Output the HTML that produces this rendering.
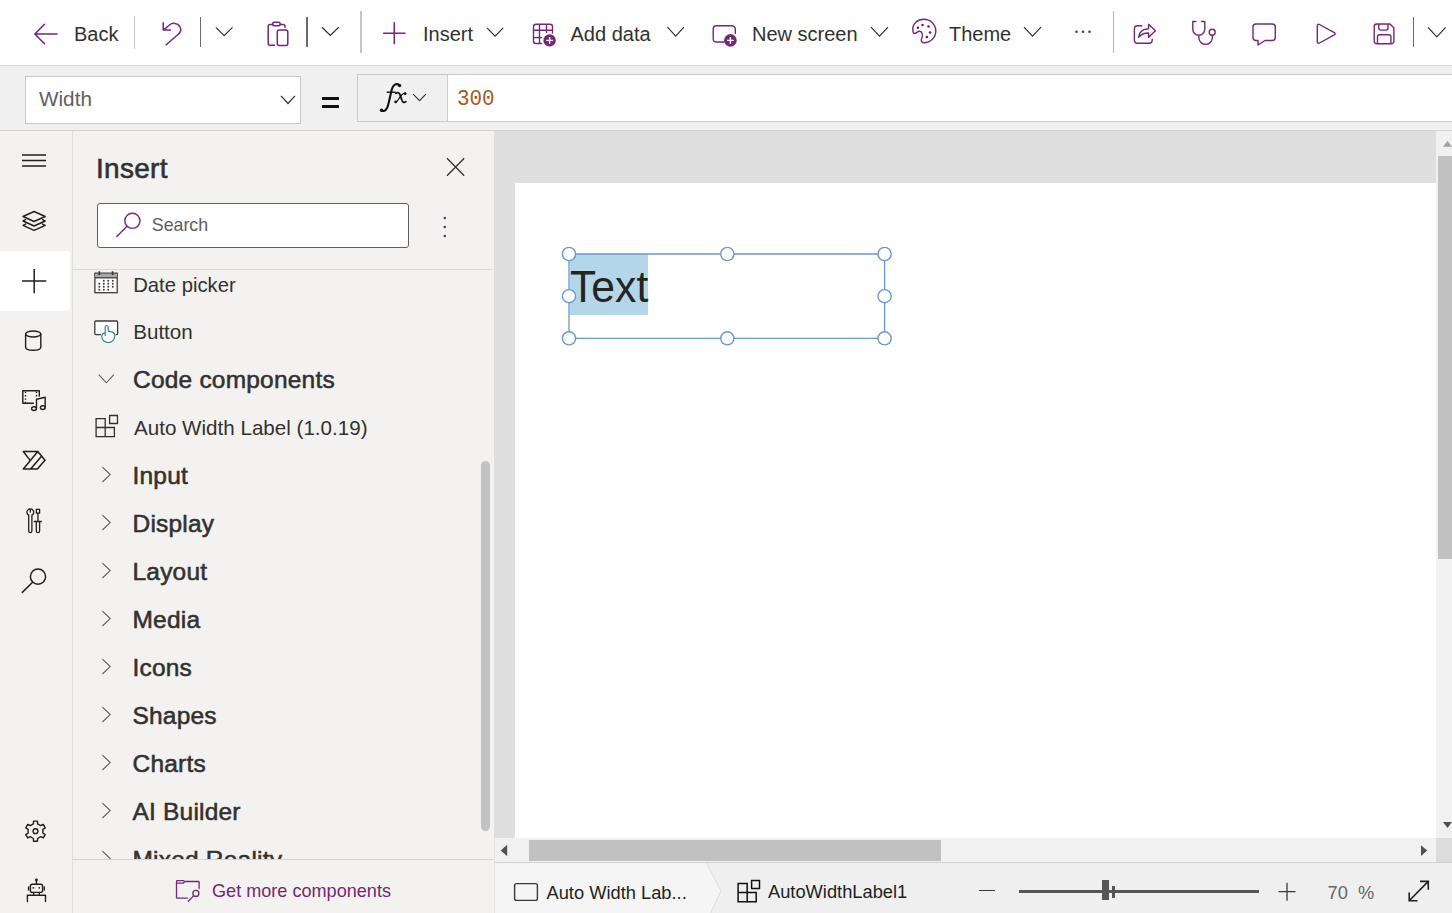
<!DOCTYPE html>
<html><head><meta charset="utf-8">
<style>
*{box-sizing:border-box;margin:0;padding:0}
html,body{width:1452px;height:913px;overflow:hidden;background:#fff;font-family:"Liberation Sans",sans-serif;color:#323130}
.a{position:absolute}
svg{position:absolute;overflow:visible}
.t{position:absolute;white-space:nowrap;line-height:1}
</style></head><body>

<div class="a" style="left:0px;top:0px;width:1452px;height:65px;background:#fff;"></div>
<div class="a" style="left:0px;top:65px;width:1452px;height:1px;background:#d6d6d6;"></div>
<div class="a" style="left:0px;top:66px;width:1452px;height:64px;background:#f0f0f0;"></div>
<div class="a" style="left:0px;top:130px;width:1452px;height:1px;background:#d2d2d2;"></div>
<div class="a" style="left:0px;top:131px;width:72px;height:782px;background:#f3f2f1;"></div>
<div class="a" style="left:72px;top:131px;width:1px;height:782px;background:#e1dfdd;"></div>
<div class="a" style="left:73px;top:131px;width:421px;height:782px;background:#f3f2f1;"></div>
<div class="a" style="left:494px;top:131px;width:942px;height:707px;background:#dfdfdf;"></div>
<div class="a" style="left:515px;top:183px;width:921px;height:655px;background:#fff;"></div>
<div class="a" style="left:1436px;top:131px;width:16px;height:707px;background:#f1f1f1;"></div>
<div class="a" style="left:494px;top:838px;width:942px;height:24px;background:#f1f1f1;"></div>
<div class="a" style="left:1436px;top:838px;width:16px;height:24px;background:#dcdcdc;"></div>
<div class="a" style="left:494px;top:862px;width:958px;height:1px;background:#d0d0d0;"></div>
<div class="a" style="left:494px;top:863px;width:958px;height:50px;background:#efefef;"></div>
<svg width="1452" height="913" style="left:0;top:0" fill="none" stroke="#742774" stroke-width="1.6" stroke-linecap="round" stroke-linejoin="round"><path d="M34.8 34 H57 M44.5 24.3 L34.8 34 L44.5 43.7"/></svg>
<div class="t" style="left:74px;top:24.07px;font-size:20px;color:#323130;font-weight:400;font-family:'Liberation Sans',sans-serif;">Back</div>
<div class="a" style="left:134px;top:16px;width:1px;height:33px;background:#c8c8c8;"></div>
<svg width="1452" height="913" style="left:0;top:0" fill="none" stroke="#742774" stroke-width="1.5" stroke-linecap="round" stroke-linejoin="round"><path d="M163.2 22.8 V30 H170.5 M163.5 29.8 L169.5 25 C172.5 22.5 177.5 22.8 179.8 26.5 C181.5 29.5 180.5 32.5 178.3 34.3 L166.2 44.8"/></svg>
<div class="a" style="left:200px;top:17px;width:1px;height:30px;background:#6b6b6b;"></div>
<svg width="1452" height="913" style="left:0;top:0" fill="none" stroke="#323130" stroke-width="1.2" stroke-linecap="round" stroke-linejoin="round"><path d="M215.8 27.4 L224.15 35.7 L232.5 27.4" stroke-linecap="butt" stroke-linejoin="miter"/></svg>
<svg width="1452" height="913" style="left:0;top:0" fill="none" stroke="#742774" stroke-width="1.5" stroke-linecap="round" stroke-linejoin="round"><path d="M274.6 45.2 H270.2 A2 2 0 0 1 268.2 43.2 V26.4 A2 2 0 0 1 270.2 24.4 H272.6 M280.2 24.4 H283 A2 2 0 0 1 285 26.4 V27.3"/><rect x="272.6" y="22.3" width="7.6" height="3.5" rx="1.75"/><rect x="277.3" y="29.9" width="10.5" height="15.5" rx="2"/></svg>
<div class="a" style="left:306px;top:17px;width:2px;height:30px;background:#6b6b6b;"></div>
<svg width="1452" height="913" style="left:0;top:0" fill="none" stroke="#323130" stroke-width="1.2" stroke-linecap="round" stroke-linejoin="round"><path d="M322 27.3 L330.35 35.5 L338.7 27.3" stroke-linecap="butt" stroke-linejoin="miter"/></svg>
<div class="a" style="left:360px;top:11px;width:2px;height:42px;background:#c8c8c8;"></div>
<svg width="1452" height="913" style="left:0;top:0" fill="none" stroke="#742774" stroke-width="1.6" stroke-linecap="round" stroke-linejoin="round"><path d="M394.3 22.7 V43.6 M383.7 33.2 H404.9"/></svg>
<div class="t" style="left:423px;top:23.77px;font-size:20px;color:#323130;font-weight:400;font-family:'Liberation Sans',sans-serif;">Insert</div>
<svg width="1452" height="913" style="left:0;top:0" fill="none" stroke="#323130" stroke-width="1.2" stroke-linecap="round" stroke-linejoin="round"><path d="M487 27.8 L495.1 36.2 L503.2 27.8" stroke-linecap="butt" stroke-linejoin="miter"/></svg>
<svg width="1452" height="913" style="left:0;top:0" fill="none" stroke="#742774" stroke-width="1.4" stroke-linecap="round" stroke-linejoin="round"><path d="M541.5 43.5 H536 A2.5 2.5 0 0 1 533.5 41 V26.7 A2.5 2.5 0 0 1 536 24.2 H550 A2.5 2.5 0 0 1 552.5 26.7 V33 M533.5 30.3 H552.5 M533.5 37.6 H541.7 M539.5 24.2 V43.5 M546.5 24.2 V32.5"/></svg>
<svg width="1452" height="913" style="left:0;top:0"><circle cx="549.6" cy="40.4" r="6.2" fill="#742774"/><path d="M549.6 37 V43.8 M546.2 40.4 H553" stroke="#fff" stroke-width="1.4"/></svg>
<div class="t" style="left:570.5px;top:23.77px;font-size:20px;color:#323130;font-weight:400;font-family:'Liberation Sans',sans-serif;">Add data</div>
<svg width="1452" height="913" style="left:0;top:0" fill="none" stroke="#323130" stroke-width="1.2" stroke-linecap="round" stroke-linejoin="round"><path d="M667.5 27.2 L675.7 36.2 L683.9 27.2" stroke-linecap="butt" stroke-linejoin="miter"/></svg>
<svg width="1452" height="913" style="left:0;top:0" fill="none" stroke="#742774" stroke-width="1.4" stroke-linecap="round" stroke-linejoin="round"><path d="M724 42 H716.5 A3.3 3.3 0 0 1 713.2 38.7 V29 A3.3 3.3 0 0 1 716.5 25.7 H732 A3.3 3.3 0 0 1 735.3 29 V33.5"/></svg>
<svg width="1452" height="913" style="left:0;top:0"><circle cx="730.4" cy="40.4" r="6.3" fill="#742774"/><path d="M730.4 37 V43.8 M727 40.4 H733.8" stroke="#fff" stroke-width="1.4"/></svg>
<div class="t" style="left:752px;top:23.77px;font-size:20px;color:#323130;font-weight:400;font-family:'Liberation Sans',sans-serif;">New screen</div>
<svg width="1452" height="913" style="left:0;top:0" fill="none" stroke="#323130" stroke-width="1.2" stroke-linecap="round" stroke-linejoin="round"><path d="M871 27.2 L879.5 36.2 L888 27.2" stroke-linecap="butt" stroke-linejoin="miter"/></svg>
<svg width="1452" height="913" style="left:0;top:0" fill="none" stroke="#742774" stroke-width="1.4" stroke-linecap="round" stroke-linejoin="round"><path d="M912.8 30 C912.3 23.5 917.8 19.2 924 19.2 C930.5 19.2 935.8 24.5 935.8 31 C935.8 37.5 930.5 42.7 924 42.7 C921.5 42.7 920.7 40.5 921.7 38.5 C923.3 35.5 922.5 31.5 919.5 31.3 C917.5 31.2 916.5 33.5 914.6 33.5 C913.4 33.5 912.9 32 912.8 30 Z"/></svg>
<svg width="1452" height="913" style="left:0;top:0" fill="#5a1f5a"><circle cx="917.9" cy="27.8" r="1.25"/><circle cx="922.5" cy="25" r="1.25"/><circle cx="928.5" cy="26.4" r="1.25"/><circle cx="930" cy="32.5" r="1.25"/><circle cx="926.9" cy="37" r="1.25"/></svg>
<div class="t" style="left:949px;top:23.77px;font-size:20px;color:#323130;font-weight:400;font-family:'Liberation Sans',sans-serif;">Theme</div>
<svg width="1452" height="913" style="left:0;top:0" fill="none" stroke="#323130" stroke-width="1.2" stroke-linecap="round" stroke-linejoin="round"><path d="M1024 27.2 L1032.5 36.2 L1041 27.2" stroke-linecap="butt" stroke-linejoin="miter"/></svg>
<svg width="1452" height="913" style="left:0;top:0" fill="#742774"><circle cx="1076.5" cy="31.7" r="1.3"/><circle cx="1083" cy="31.7" r="1.3"/><circle cx="1089.5" cy="31.7" r="1.3"/></svg>
<div class="a" style="left:1113px;top:11px;width:1px;height:42px;background:#b4b4b4;"></div>
<svg width="1452" height="913" style="left:0;top:0" fill="none" stroke="#742774" stroke-width="1.4" stroke-linecap="round" stroke-linejoin="round"><path d="M1141.9 25.7 H1137.4 A3 3 0 0 0 1134.4 28.7 V40.2 A3 3 0 0 0 1137.4 43.2 H1149.2 A3 3 0 0 0 1152.2 40.2 V39.1"/><path d="M1138.6 37.2 C1139.2 32.2 1143 29 1148.6 28.8 V24.3 L1155.5 30.8 L1148.6 37.3 V33 C1144.2 33 1141 34.5 1138.6 37.2 Z"/></svg>
<svg width="1452" height="913" style="left:0;top:0" fill="none" stroke="#742774" stroke-width="1.4" stroke-linecap="round" stroke-linejoin="round"><path d="M1196 21.5 H1192.8 V29.3 A6 6 0 0 0 1204.8 29.3 V21.5 H1201.5 M1198.8 35.2 V37.6 A6.8 6.8 0 0 0 1212.4 37.6 V35.4"/><circle cx="1212.2" cy="32.2" r="3"/></svg>
<svg width="1452" height="913" style="left:0;top:0" fill="none" stroke="#742774" stroke-width="1.4" stroke-linecap="round" stroke-linejoin="round"><path d="M1256 24 H1272.3 A3 3 0 0 1 1275.3 27 V37.5 A3 3 0 0 1 1272.3 40.5 H1265 L1258 45 V40.5 H1256 A3 3 0 0 1 1253 37.5 V27 A3 3 0 0 1 1256 24 Z"/></svg>
<svg width="1452" height="913" style="left:0;top:0" fill="none" stroke="#742774" stroke-width="1.4" stroke-linecap="round" stroke-linejoin="round"><path d="M1317.3 25.8 C1317.3 24.5 1318.4 23.9 1319.5 24.5 L1334.3 32.6 C1335.4 33.2 1335.4 34.3 1334.3 34.9 L1319.5 43 C1318.4 43.6 1317.3 43 1317.3 41.8 Z"/></svg>
<svg width="1452" height="913" style="left:0;top:0" fill="none" stroke="#742774" stroke-width="1.4" stroke-linecap="round" stroke-linejoin="round"><path d="M1376.7 24 H1390 L1393.9 27.9 V41.2 A2.5 2.5 0 0 1 1391.4 43.7 H1376.7 A2.5 2.5 0 0 1 1374.2 41.2 V26.5 A2.5 2.5 0 0 1 1376.7 24 Z M1378.8 24 V28.1 A2 2 0 0 0 1380.8 30.1 H1386 A2 2 0 0 0 1388 28.1 V24 M1377.5 43.7 V36.7 A2 2 0 0 1 1379.5 34.7 H1388.9 A2 2 0 0 1 1390.9 36.7 V43.7"/></svg>
<div class="a" style="left:1413px;top:17px;width:1px;height:30px;background:#6b6b6b;"></div>
<svg width="1452" height="913" style="left:0;top:0" fill="none" stroke="#323130" stroke-width="1.2" stroke-linecap="round" stroke-linejoin="round"><path d="M1428 27.4 L1436.8 36.8 L1445.6 27.4" stroke-linecap="butt" stroke-linejoin="miter"/></svg>
<div class="a" style="left:25px;top:76px;width:276px;height:48px;background:#fff;border:1px solid #c8c8c8"></div>
<div class="t" style="left:39px;top:89.48px;font-size:20.7px;color:#605e5c;font-weight:400;font-family:'Liberation Sans',sans-serif;">Width</div>
<svg width="1452" height="913" style="left:0;top:0" fill="none" stroke="#323130" stroke-width="1.2" stroke-linecap="round" stroke-linejoin="round"><path d="M281 95.8 L288.0 103.5 L295 95.8" stroke-linecap="butt" stroke-linejoin="miter"/></svg>
<div class="a" style="left:322px;top:97px;width:17px;height:3px;background:#111;"></div>
<div class="a" style="left:322px;top:105px;width:17px;height:3px;background:#111;"></div>
<div class="a" style="left:357px;top:74px;width:91px;height:48px;background:#f0f0f0;border:1px solid #c8c8c8;border-right:1px solid #cfcfcf"></div>
<svg width="1452" height="913" style="left:0;top:0" fill="none" stroke="#111" stroke-width="1.5" stroke-linecap="round" stroke-linejoin="round"><path d="M399.6 85.2 C396.5 82.6 392.8 84.8 391.6 90 L388.3 104.5 C387.2 109.3 384.8 112.2 381.4 110.6" stroke-width="2.1"/><path d="M386.6 92.2 H395.6" stroke-width="1.4" stroke-linecap="butt"/><path d="M395.8 93.2 C398.3 91.9 399.6 93 400.6 96.2 L401.9 100.2 C402.8 102.6 404 103 405.8 101.8" stroke-width="1.8"/><path d="M405.4 93.6 C403.4 92.6 401.8 94.2 399.2 98.2 C397.8 100.6 396.8 102.6 395.4 102" stroke-width="1.2"/></svg>
<svg width="1452" height="913" style="left:0;top:0" fill="#111"><circle cx="399.6" cy="85.6" r="1.7"/><circle cx="381.6" cy="110.2" r="1.7"/><circle cx="405.2" cy="93.7" r="1.4"/><circle cx="395.7" cy="101.9" r="1.4"/></svg>
<svg width="1452" height="913" style="left:0;top:0" fill="none" stroke="#323130" stroke-width="1.1" stroke-linecap="round" stroke-linejoin="round"><path d="M413.1 94.2 L419.5 100.60000000000001 L425.90000000000003 94.2" stroke-linecap="butt" stroke-linejoin="miter"/></svg>
<div class="a" style="left:448px;top:74px;width:1010px;height:48px;background:#fff;border-top:1px solid #c8c8c8;border-bottom:1px solid #c8c8c8"></div>
<div class="t" style="left:457px;top:87.75px;font-size:22.5px;color:#a5591a;font-weight:400;font-family:'Liberation Mono',monospace;transform:scaleX(0.93);transform-origin:0 0;">300</div>
<svg width="1452" height="913" style="left:0;top:0" fill="none" stroke="#201f1e" stroke-width="1.3" stroke-linecap="round" stroke-linejoin="round"><path d="M22 155 H46 M22 160.5 H46 M22 166 H46" stroke-linecap="butt"/></svg>
<svg width="1452" height="913" style="left:0;top:0" fill="none" stroke="#201f1e" stroke-width="1.4" stroke-linecap="round" stroke-linejoin="round"><path d="M34.1 211.5 L45.2 216.5 L34.1 221.5 L23 216.5 Z M25.6 219.7 L23 221 L34.1 226 L45.2 221 L42.6 219.7 M25.6 224.1 L23 225.4 L34.1 230.4 L45.2 225.4 L42.6 224.1"/></svg>
<div class="a" style="left:0;top:251px;width:70px;height:60px;background:#fff;border-radius:0 3px 3px 0"></div>
<svg width="1452" height="913" style="left:0;top:0" fill="none" stroke="#201f1e" stroke-width="1.5" stroke-linecap="round" stroke-linejoin="round"><path d="M34.2 269 V293.2 M22 281.1 H46.3" stroke-linecap="butt"/></svg>
<svg width="1452" height="913" style="left:0;top:0" fill="none" stroke="#201f1e" stroke-width="1.4" stroke-linecap="round" stroke-linejoin="round"><ellipse cx="33.2" cy="334" rx="7.6" ry="3"/><path d="M25.6 334 V347.3 C25.6 349 29 350.3 33.2 350.3 C37.4 350.3 40.8 349 40.8 347.3 V334"/></svg>
<svg width="1452" height="913" style="left:0;top:0" fill="none" stroke="#201f1e" stroke-width="1.4" stroke-linecap="round" stroke-linejoin="round"><path d="M33.4 403.2 H22.8 V390.8 H39.3 V396 "/><path d="M25.5 391.8 V403 M36.5 391.8 V396.5" stroke-dasharray="1.3 2" stroke-linecap="butt"/><path d="M36.5 408.5 V399.3 L45.2 397.3 V407.6"/><ellipse cx="34" cy="408.6" rx="2.4" ry="1.9"/><ellipse cx="42.8" cy="407.6" rx="2.4" ry="1.9"/></svg>
<svg width="1452" height="913" style="left:0;top:0" fill="none" stroke="#201f1e" stroke-width="1.5" stroke-linecap="round" stroke-linejoin="round"><path d="M23.3 451.5 H37.8 L45 460.2 L37.4 469 H23.3 L37.8 451.5 M23.3 451.5 L29.4 459.4 M41.3 456.4 L30.6 469"/></svg>
<svg width="1452" height="913" style="left:0;top:0" fill="none" stroke="#201f1e" stroke-width="1.3" stroke-linecap="round" stroke-linejoin="round"><path d="M28.7 515 V531 A1.6 1.6 0 0 0 31.9 531 V515 M28.7 515.2 A3.4 3.4 0 1 1 31.9 515.2 M30.3 509 V512"/><path d="M36.3 509.3 H39.6 V513.2 H36.3 Z M37.95 513.2 V521.5 M34.3 521.5 H41.3 M36.3 521.5 V531 A1.6 1.6 0 0 0 39.6 531 V521.5"/></svg>
<svg width="1452" height="913" style="left:0;top:0" fill="none" stroke="#201f1e" stroke-width="1.5" stroke-linecap="round" stroke-linejoin="round"><circle cx="38" cy="576.7" r="7.6"/><path d="M32.6 582.2 L22.3 592.4"/></svg>
<svg width="1452" height="913" style="left:0;top:0" fill="none" stroke="#201f1e" stroke-width="1.4" stroke-linecap="round" stroke-linejoin="round"><path d="M33.41 823.89 L33.53 821.09 L37.47 821.09 L37.59 823.89 L40.78 825.73 L43.27 824.44 L45.24 827.85 L42.87 829.36 L42.87 833.04 L45.24 834.55 L43.27 837.96 L40.78 836.67 L37.59 838.51 L37.47 841.31 L33.53 841.31 L33.41 838.51 L30.22 836.67 L27.73 837.96 L25.76 834.55 L28.13 833.04 L28.13 829.36 L25.76 827.85 L27.73 824.44 L30.22 825.73 Z"/><circle cx="35.5" cy="831.2" r="2.4"/></svg>
<svg width="1452" height="913" style="left:0;top:0" fill="none" stroke="#201f1e" stroke-width="1.4" stroke-linecap="round" stroke-linejoin="round"><rect x="30.4" y="884.3" width="12.2" height="8.1" rx="2"/><path d="M36.4 884.3 V880.5 M33.6 892.4 V895.3 M39.3 892.4 V895.3 M27.4 901.6 V895.3 H45.5 V901.6 M28.6 887 V890 M44.3 887 V890"/></svg>
<svg width="1452" height="913" style="left:0;top:0" fill="#201f1e"><circle cx="36.4" cy="879.9" r="1.4"/><circle cx="33.4" cy="887.8" r="0.9"/><circle cx="39.3" cy="887.8" r="0.9"/></svg>
<div class="t" style="left:96px;top:154.80px;font-size:28px;color:#323130;font-weight:400;font-family:'Liberation Sans',sans-serif;-webkit-text-stroke:0.6px #323130;letter-spacing:0.3px;">Insert</div>
<svg width="1452" height="913" style="left:0;top:0" fill="none" stroke="#323130" stroke-width="1.3" stroke-linecap="round" stroke-linejoin="round"><path d="M447 158.3 L464.2 175.7 M464.2 158.3 L447 175.7" stroke-linecap="butt"/></svg>
<div class="a" style="left:97px;top:203px;width:312px;height:45px;background:#fff;border:1px solid #605e5c;border-radius:3px"></div>
<svg width="1452" height="913" style="left:0;top:0" fill="none" stroke="#742774" stroke-width="1.4" stroke-linecap="round" stroke-linejoin="round"><circle cx="132.4" cy="220.8" r="7.6"/><path d="M127 226.3 L116.8 236.6"/></svg>
<div class="t" style="left:151.8px;top:216.93px;font-size:17.8px;color:#605e5c;font-weight:400;font-family:'Liberation Sans',sans-serif;">Search</div>
<svg width="1452" height="913" style="left:0;top:0" fill="#742774"><circle cx="444.8" cy="218" r="1.3"/><circle cx="444.8" cy="227" r="1.3"/><circle cx="444.8" cy="236" r="1.3"/></svg>
<div class="a" style="left:73px;top:269px;width:420px;height:1px;background:#dcdad8;"></div>
<div class="a" style="left:73px;top:270px;width:421px;height:589px;overflow:hidden">
<div class="t" style="left:60.19999999999999px;top:4.52px;font-size:20.3px;color:#323130;font-weight:400;">Date picker</div>
<div class="t" style="left:60.19999999999999px;top:51.96px;font-size:20.6px;color:#323130;font-weight:400;">Button</div>
<div class="t" style="left:60px;top:97.76px;font-size:24.5px;color:#323130;font-weight:400;-webkit-text-stroke:0.55px #323130;letter-spacing:0.2px;">Code components</div>
<div class="t" style="left:61px;top:148.06px;font-size:20.6px;color:#323130;font-weight:400;">Auto Width Label (1.0.19)</div>
<div class="t" style="left:59.5px;top:194.26px;font-size:24.5px;color:#323130;font-weight:400;-webkit-text-stroke:0.55px #323130;letter-spacing:0.2px;">Input</div>
<div class="t" style="left:59.5px;top:242.26px;font-size:24.5px;color:#323130;font-weight:400;-webkit-text-stroke:0.55px #323130;letter-spacing:0.2px;">Display</div>
<div class="t" style="left:59.5px;top:290.26px;font-size:24.5px;color:#323130;font-weight:400;-webkit-text-stroke:0.55px #323130;letter-spacing:0.2px;">Layout</div>
<div class="t" style="left:59.5px;top:338.26px;font-size:24.5px;color:#323130;font-weight:400;-webkit-text-stroke:0.55px #323130;letter-spacing:0.2px;">Media</div>
<div class="t" style="left:59.5px;top:386.26px;font-size:24.5px;color:#323130;font-weight:400;-webkit-text-stroke:0.55px #323130;letter-spacing:0.2px;">Icons</div>
<div class="t" style="left:59.5px;top:434.26px;font-size:24.5px;color:#323130;font-weight:400;-webkit-text-stroke:0.55px #323130;letter-spacing:0.2px;">Shapes</div>
<div class="t" style="left:59.5px;top:482.26px;font-size:24.5px;color:#323130;font-weight:400;-webkit-text-stroke:0.55px #323130;letter-spacing:0.2px;">Charts</div>
<div class="t" style="left:59.5px;top:530.26px;font-size:24.5px;color:#323130;font-weight:400;-webkit-text-stroke:0.55px #323130;letter-spacing:0.2px;">AI Builder</div>
<div class="t" style="left:59.5px;top:578.26px;font-size:24.5px;color:#323130;font-weight:400;-webkit-text-stroke:0.55px #323130;letter-spacing:0.2px;">Mixed Reality</div>
</div>
<svg width="1452" height="913" style="left:0;top:0" fill="none" stroke="#3b3a39" stroke-width="1.3" stroke-linecap="round" stroke-linejoin="round"><rect x="94.9" y="273.2" width="22.3" height="19.5" stroke-linejoin="miter" fill="#fff"/><rect x="95.5" y="273.8" width="21.1" height="3.6" fill="#a8a8a8" stroke="none"/><path d="M95 277.8 H117.2" stroke-linecap="butt"/><path d="M99.3 271.2 V275 M112.6 271.2 V275" stroke-linecap="butt" stroke-width="1.7"/></svg>
<svg width="1452" height="913" style="left:0;top:0" fill="#3b3a39"><circle cx="103.8" cy="280.7" r="0.95"/><circle cx="108.2" cy="280.7" r="0.95"/><circle cx="112.8" cy="280.7" r="0.95"/><circle cx="99.3" cy="283.7" r="0.95"/><circle cx="103.8" cy="283.7" r="0.95"/><circle cx="108.2" cy="283.7" r="0.95"/><circle cx="112.8" cy="283.7" r="0.95"/><circle cx="99.3" cy="286.7" r="0.95"/><circle cx="103.8" cy="286.7" r="0.95"/><circle cx="108.2" cy="286.7" r="0.95"/><circle cx="112.8" cy="286.7" r="0.95"/><circle cx="99.3" cy="289.7" r="0.95"/><circle cx="103.8" cy="289.7" r="0.95"/><circle cx="108.2" cy="289.7" r="0.95"/></svg>
<svg width="1452" height="913" style="left:0;top:0" fill="none" stroke="#3b3a39" stroke-width="1.3" stroke-linecap="round" stroke-linejoin="round"><rect x="94.8" y="321" width="22.8" height="13.6" rx="1" fill="#fff"/></svg>
<svg width="1452" height="913" style="left:0;top:0"><path d="M105.2 332.6 V327 A1.5 1.5 0 0 1 108.2 327 V331.2 L112.3 332.2 C114 332.7 114.9 333.8 114.9 335.6 C114.9 339.6 112 342.6 108.2 342.6 C104.6 342.6 101.8 339.8 101.8 336.4 C101.8 334.6 103 333.2 105.2 332.6 Z" fill="#fff" stroke="#fff" stroke-width="2.4"/></svg>
<svg width="1452" height="913" style="left:0;top:0" fill="none" stroke="#2e8b7e" stroke-width="1.2" stroke-linecap="round" stroke-linejoin="round"><path d="M105.2 335.5 V327 A1.5 1.5 0 0 1 108.2 327 V331.2 L112.3 332.2 C114 332.7 114.9 333.8 114.9 335.6 C114.9 339.6 112 342.6 108.2 342.6 C104.6 342.6 101.8 339.8 101.8 336.4 C101.8 334.6 103 333.2 105.2 332.6"/></svg>
<svg width="1452" height="913" style="left:0;top:0" fill="none" stroke="#605e5c" stroke-width="1.1" stroke-linecap="round" stroke-linejoin="round"><path d="M98.7 374.6 L106.3 382.8 L113.9 374.6" stroke-linecap="butt" stroke-linejoin="miter"/></svg>
<svg width="1452" height="913" style="left:0;top:0" fill="none" stroke="#323130" stroke-width="1.3" stroke-linecap="round" stroke-linejoin="round"><path d="M96.1 418.6 H105.2 V436.6 M96.1 418.6 V436.6 H114.4 V427.5 H96.1" stroke-linecap="square" stroke-linejoin="miter"/><rect x="109.6" y="415.5" width="7.9" height="8"/></svg>
<div class="a" style="left:73px;top:270px;width:421px;height:589px;overflow:hidden">
<svg width="1452" height="913" style="left:-73px;top:-270px" fill="none" stroke="#605e5c" stroke-width="1.1" stroke-linecap="butt" stroke-linejoin="miter"><path d="M102.4 467.2 L110.2 474.59999999999997 L102.4 482.0"/><path d="M102.4 515.2 L110.2 522.6 L102.4 530.0"/><path d="M102.4 563.2 L110.2 570.6 L102.4 578.0"/><path d="M102.4 611.2 L110.2 618.6 L102.4 626.0"/><path d="M102.4 659.2 L110.2 666.6 L102.4 674.0"/><path d="M102.4 707.2 L110.2 714.6 L102.4 722.0"/><path d="M102.4 755.2 L110.2 762.6 L102.4 770.0"/><path d="M102.4 803.2 L110.2 810.6 L102.4 818.0"/><path d="M102.4 851.2 L110.2 858.6 L102.4 866.0"/></svg>
</div>
<div class="a" style="left:481px;top:461px;width:9px;height:370px;background:#c2c2c2;border-radius:4.5px"></div>
<div class="a" style="left:73px;top:859px;width:420px;height:1px;background:#d6d4d2;"></div>
<div class="a" style="left:73px;top:860px;width:421px;height:53px;background:#f3f2f1;"></div>
<svg width="1452" height="913" style="left:0;top:0" fill="none" stroke="#742774" stroke-width="1.3" stroke-linecap="round" stroke-linejoin="round"><path d="M187.5 898.2 H177.3 A0.8 0.8 0 0 1 176.5 897.4 V881.5 A0.8 0.8 0 0 1 177.3 880.7 H183.6 L184.7 881.5 H198.3 A0.8 0.8 0 0 1 199.1 882.3 V888.5 M176.5 883.1 H183.4 L184.7 881.5"/><circle cx="195.9" cy="893.4" r="3"/><path d="M193.8 895.6 L188.3 901.2"/></svg>
<div class="t" style="left:212px;top:881.68px;font-size:18.1px;color:#742774;font-weight:400;font-family:'Liberation Sans',sans-serif;">Get more components</div>
<div class="a" style="left:569.5px;top:254px;width:78.3px;height:60.7px;background:#b3d7e8;"></div>
<div class="t" style="left:569.8px;top:264.86px;font-size:44.7px;color:#252423;font-weight:400;font-family:'Liberation Sans',sans-serif;transform:scaleX(0.955);transform-origin:0 0;">Text</div>
<svg width="1452" height="913" style="left:0;top:0" fill="none" stroke="#6a96d2" stroke-width="1.3" stroke-linecap="round" stroke-linejoin="round"><rect x="569" y="254" width="315.6" height="84.3"/></svg>
<svg width="1452" height="913" style="left:0;top:0" fill="#fff" stroke="#6a96d2" stroke-width="1.4"><circle cx="569" cy="254" r="6.6"/><circle cx="569" cy="296.2" r="6.6"/><circle cx="569" cy="338.3" r="6.6"/><circle cx="727.3" cy="254" r="6.6"/><circle cx="727.3" cy="338.3" r="6.6"/><circle cx="884.6" cy="254" r="6.6"/><circle cx="884.6" cy="296.2" r="6.6"/><circle cx="884.6" cy="338.3" r="6.6"/></svg>
<svg width="1452" height="913" style="left:0;top:0" fill="#a0a0a0"><path d="M1443 146.8 L1447.5 141 L1452 146.8 Z"/><path d="M1443 822 L1447.5 828 L1452 822 Z" fill="#505050"/></svg>
<div class="a" style="left:1438px;top:156px;width:14px;height:403px;background:#c1c1c1;"></div>
<svg width="1452" height="913" style="left:0;top:0" fill="#505050"><path d="M507.2 844.8 L500.7 850.5 L507.2 856.3 Z"/><path d="M1421 845.2 L1427.2 850.6 L1421 856 Z"/></svg>
<div class="a" style="left:529px;top:840px;width:412px;height:21px;background:#c1c1c1;"></div>
<svg width="1452" height="913" style="left:0;top:0"><path d="M494 863 H706.4 L721 891 L710.7 913 H494 Z" fill="#f5f5f5"/><path d="M706.4 863 L721 891 L710.7 913" fill="none" stroke="#dcdcdc" stroke-width="1"/></svg>
<svg width="1452" height="913" style="left:0;top:0" fill="none" stroke="#3b3a39" stroke-width="1.4" stroke-linecap="round" stroke-linejoin="round"><rect x="514.6" y="883.6" width="22.8" height="16.8" rx="2"/></svg>
<div class="t" style="left:546.5px;top:883.51px;font-size:18.3px;color:#201f1e;font-weight:400;font-family:'Liberation Sans',sans-serif;">Auto Width Lab...</div>
<div class="a" style="left:494px;top:838px;width:1px;height:75px;background:#e3e3e3;"></div>
<svg width="1452" height="913" style="left:0;top:0" fill="none" stroke="#111111" stroke-width="1.5" stroke-linecap="round" stroke-linejoin="round"><path d="M738.1 883.5 H747.2 V901.7 M738.1 883.5 V901.7 H756.2 V892.6 H738.1" stroke-linecap="square" stroke-linejoin="miter"/><rect x="751.6" y="880.5" width="7.9" height="7.9"/></svg>
<div class="t" style="left:768px;top:883.41px;font-size:18.3px;color:#201f1e;font-weight:400;font-family:'Liberation Sans',sans-serif;">AutoWidthLabel1</div>
<div class="a" style="left:978.6px;top:890px;width:16.3px;height:1.3px;background:#3b3a39;"></div>
<div class="a" style="left:1019.3px;top:889.8px;width:240px;height:3.2px;background:#555555;"></div>
<div class="a" style="left:1102.3px;top:879.7px;width:6.7px;height:20px;background:#555555;"></div>
<div class="a" style="left:1111.8px;top:886.2px;width:3px;height:12.3px;background:#555555;"></div>
<svg width="1452" height="913" style="left:0;top:0" fill="none" stroke="#3b3a39" stroke-width="1.3" stroke-linecap="round" stroke-linejoin="round"><path d="M1287 882.8 V900.7 M1278.5 891.7 H1295.5" stroke-linecap="butt"/></svg>
<div class="t" style="left:1327.5px;top:883.51px;font-size:18.3px;color:#666666;font-weight:400;font-family:'Liberation Sans',sans-serif;">70</div>
<div class="t" style="left:1358px;top:883.51px;font-size:18.3px;color:#666666;font-weight:400;font-family:'Liberation Sans',sans-serif;">%</div>
<svg width="1452" height="913" style="left:0;top:0" fill="none" stroke="#201f1e" stroke-width="1.6" stroke-linecap="round" stroke-linejoin="round"><path d="M1409.2 900.8 L1428.3 881.4 M1409.2 892.5 V900.8 H1417.5 M1420 881.4 H1428.3 V889.7" stroke-linecap="butt" stroke-linejoin="miter"/></svg>
</body></html>
